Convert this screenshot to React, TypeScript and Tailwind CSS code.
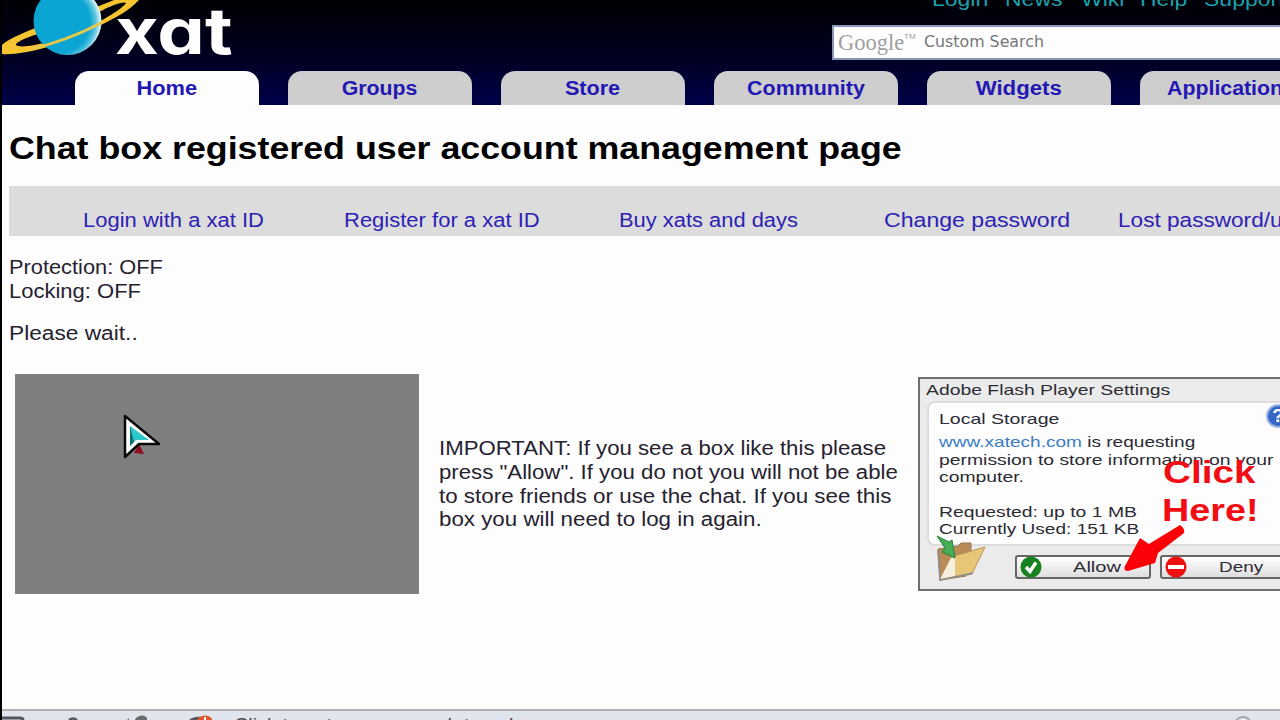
import type { ReactNode } from 'react'

const tabs = [
  { label: 'Home', active: true, stretch: 'scale-x-[1.09]' },
  { label: 'Groups', stretch: 'scale-x-[1.065]' },
  { label: 'Store', stretch: 'scale-x-[1.08]' },
  { label: 'Community', stretch: 'scale-x-[1.07]' },
  { label: 'Widgets', stretch: 'scale-x-[1.11]' },
  { label: 'Applications', stretch: 'scale-x-[1.065]' },
]

const topLinks = [
  { label: 'Login', box: 'w-[73px]' },
  { label: 'News', box: 'w-[76px]' },
  { label: 'Wiki', box: 'w-[59px]' },
  { label: 'Help', box: 'w-[64px]' },
  { label: 'Support', box: 'w-[90px]' },
]

const accountLinks = [
  { label: 'Login with a xat ID', box: 'w-[261px]', stretch: 'scale-x-[1.1]' },
  { label: 'Register for a xat ID', box: 'w-[275px]', stretch: 'scale-x-[1.1]' },
  { label: 'Buy xats and days', box: 'w-[265px]', stretch: 'scale-x-[1.095]' },
  { label: 'Change password', box: 'w-[234px]', stretch: 'scale-x-[1.155]' },
  { label: 'Lost password/user', box: 'w-[240px]', stretch: 'scale-x-[1.13]' },
]

function Wide({ className, children }: { className: string; children: ReactNode }) {
  return <span className={`inline-block origin-left whitespace-nowrap ${className}`}>{children}</span>
}

function Planet() {
  return (
    <svg className="h-[60px] w-[142px] shrink-0" viewBox="0 0 142 60">
      <defs>
        <radialGradient id="ball" cx="0.38" cy="0.52" r="0.64">
          <stop offset="0.7" stopColor="#0aa5d3" />
          <stop offset="0.84" stopColor="#5cc4e0" />
          <stop offset="0.97" stopColor="#f6fcfe" />
        </radialGradient>
      </defs>
      <path d="M36 27C18 34 5 40 0 45V54C10 55 28 52 46 47V42C30 46 18 48 14 45C13 43 22 38 36 34Z" fill="#f6c431" />
      <path d="M92 8 112 0H137C128 10 115 17 97 26V22C111 14 123 6 124 3C122 1 110 5 97 12Z" fill="#f6c431" />
      <circle cx="65.500" cy="21" r="34" fill="url(#ball)" />
      <path d="M30 48.500C52 44 76 35 100 22.500" fill="none" stroke="#e8c84b" strokeWidth="3" />
    </svg>
  )
}

function Header() {
  return (
    <header className="flex h-[105px] shrink-0 flex-col justify-between overflow-hidden bg-linear-to-b from-[#000006] via-[#00001f] to-[#00004a]">
      <div className="flex h-[60px] justify-between">
        <div className="flex">
          <Planet />
          <Wide className="-ml-[29px] h-[60px] scale-x-[1.18] font-[Inter] text-[64px] leading-[62px] font-bold text-white [font-feature-settings:'cv11']">
            xat
          </Wide>
        </div>
        <div className="w-[448px] shrink-0">
          <nav className="-mt-[13px] ml-[100px] flex h-6 w-[400px] text-[20px] leading-6 text-[#1ba0ad]">
            {topLinks.map((link) => (
              <a key={link.label} className={`shrink-0 ${link.box}`}>
                <Wide className="scale-x-[1.15]">{link.label}</Wide>
              </a>
            ))}
          </nav>
          <div className="mt-[14px] flex h-[35px] items-center border-2 border-r-0 border-[#8b95b5] bg-[#fdfefd] pl-[4px]">
            <span className="flex w-[86px] shrink-0 text-[#a0a0a0]">
              <Wide className="w-[66px] scale-x-[0.98] font-['Liberation_Serif',serif] text-[23px] leading-7">Google</Wide>
              <span className="text-[8px] leading-4">TM</span>
            </span>
            <Wide className="scale-x-[1.02] font-['DejaVu_Sans',sans-serif] text-[15.500px] text-[#777]">Custom Search</Wide>
          </div>
        </div>
      </div>
      <nav className="flex gap-[29px] pl-[73px]">
        {tabs.map((tab) => (
          <a
            key={tab.label}
            className={`flex h-[34px] w-[184px] shrink-0 justify-center rounded-t-[14px] text-[20px] leading-[34px] font-bold text-[#2318b4] ${
              tab.active ? 'bg-[#fdfdfe]' : 'bg-[#cecece]'
            }`}
          >
            <span className={`block pr-px ${tab.stretch}`}>{tab.label}</span>
          </a>
        ))}
      </nav>
    </header>
  )
}

function FolderIcon() {
  return (
    <svg className="h-[48px] w-[50px] shrink-0" viewBox="0 0 50 48">
      <path d="M2 14 22 11 25 8H35V16L30 41 4 45Z" fill="#b98a55" stroke="#8f7650" />
      <path d="M4 45 15 22 49 12 36 39Z" fill="#e8c677" stroke="#b29559" />
      <path d="M4 44 15 23 19 22 19 41Z" fill="#f6efdc" />
      <path d="M2 15 4 45 37 38" fill="none" stroke="#8c8c8c" strokeWidth="1.500" />
      <path d="M1 1 13 7 16 5 19 23 6 17 9 13Z" fill="#48ad58" stroke="#238338" />
    </svg>
  )
}

function FlashDialog() {
  return (
    <div className="relative flex h-[214px] w-[390px] shrink-0 flex-col border-2 border-[#6f6f6f] bg-[#ebebeb] text-[15px] text-[#2b2b33]">
      <div className="h-[22px] pl-[6px] leading-[22px]">
        <Wide className="scale-x-[1.29]">Adobe Flash Player Settings</Wide>
      </div>
      <div className="ml-[7px] flex h-[145px] rounded-l-[8px] border-2 border-r-0 border-[#dcdcdc] bg-[#fdfdfe] pt-[7px] pl-[10px] leading-[17.400px]">
        <div className="w-[327px] shrink-0">
          <p><Wide className="scale-x-[1.3]">Local Storage</Wide></p>
          <p className="mt-[6px]">
            <Wide className="scale-x-[1.27]">
              <span className="text-[#3a7cc4]">www.xatech.com</span> is requesting
            </Wide>
          </p>
          <p><Wide className="scale-x-[1.29]">permission to store information on your</Wide></p>
          <p><Wide className="scale-x-[1.29]">computer.</Wide></p>
          <p className="mt-[17px]"><Wide className="scale-x-[1.29]">Requested: up to 1 MB</Wide></p>
          <p><Wide className="scale-x-[1.27]">Currently Used: 151 KB</Wide></p>
        </div>
        <span className="-mt-[6px] flex size-[24px] shrink-0 items-center justify-center rounded-full border-2 border-[#9db4df] bg-[#3566c8] text-[19px] font-bold text-white">
          ?
        </span>
      </div>
      <div className="flex items-start pl-[16px]">
        <div className="-mt-[11px] h-[40px]"><FolderIcon /></div>
        <button className="mt-[9px] ml-[29px] flex h-[24px] w-[136px] shrink-0 items-center rounded-[3px] border-2 border-[#666] bg-linear-to-b from-white to-[#dedede] pl-[3px]">
          <svg className="size-[22px]" viewBox="0 0 22 22">
            <circle cx="11" cy="11" r="10.500" fill="#15811f" />
            <path d="M6 11 10 15.500 16 6.500" fill="none" stroke="#fff" strokeWidth="3.500" />
          </svg>
          <Wide className="ml-[31px] scale-x-[1.34] leading-5">Allow</Wide>
        </button>
        <button className="mt-[9px] ml-[9px] flex h-[24px] w-[136px] shrink-0 items-center rounded-[3px] border-2 border-[#666] bg-linear-to-b from-white to-[#dedede] pl-[3px]">
          <svg className="size-[22px]" viewBox="0 0 22 22">
            <circle cx="11" cy="11" r="10.500" fill="#ee1111" />
            <path d="M3 11H19" stroke="#fff" strokeWidth="4" />
          </svg>
          <Wide className="ml-[32px] scale-x-[1.26] leading-5">Deny</Wide>
        </button>
      </div>

      {/* callout on top of the dialog */}
      <div className="absolute top-[74px] left-[243px] text-[32px] leading-[38px] font-bold text-[#f20d14]">
        <p><Wide className="scale-x-[1.21]">Click</Wide></p>
        <p><Wide className="-ml-px scale-x-[1.18]">Here!</Wide></p>
      </div>
      <svg className="absolute top-[143px] left-[200px] h-[52px] w-[70px]" viewBox="0 0 70 52">
        <path d="M60 3Q65 6 64 11L38 31 35 41 8 49Q3 49 5 44L20 16 29 22Z" fill="#fb0007" />
      </svg>
    </div>
  )
}

function Cursor() {
  return (
    <svg className="mt-[40px] ml-[107px] h-[46px] w-[42px]" viewBox="0 0 42 46">
      <path d="M12 39 17 30 22 40Z" fill="#8f0d1c" />
      <path d="M3 2V43L17 30H37Z" fill="#fff" stroke="#0a0a0a" strokeWidth="2.500" strokeLinejoin="round" />
      <path d="M8 12V32L14 26H27Z" fill="#2cc9cb" />
      <path d="M8 12V32L12 28Z" fill="#126d75" />
    </svg>
  )
}

function StatusBar() {
  return (
    <footer className="mt-auto flex h-[11px] shrink-0 overflow-hidden border-t-2 border-[#b0b0b0] bg-[#e0e4ec]">
      <svg className="h-[9px] w-[232px] shrink-0" viewBox="0 0 232 9">
        <path d="M0 7H18Q21 7 21 9" fill="none" stroke="#55555c" strokeWidth="3" />
        <path d="M67 9Q71 6 75 9" fill="none" stroke="#55555c" strokeWidth="2.500" />
        <path d="M125 9 127 7V9ZM133 9Q134 5 140 4.500Q146 5 145 9Z" fill="#6b6b70" />
        <path d="M187 9Q192 5 200 6V9Z" fill="#55555c" />
        <path d="M195 9Q197 5 203 4.500Q210 5 210 9Z" fill="#e2562e" />
        <path d="M203 6V9" stroke="#fff" strokeWidth="2" />
      </svg>
      <Wide className="mt-[2px] scale-x-[1.1] text-[18px] leading-6 text-[#4a4a52]">
        Click to enter your search term here
      </Wide>
      <svg className="mr-[26px] ml-auto h-[9px] w-[22px] shrink-0" viewBox="0 0 22 9">
        <circle cx="11" cy="14" r="8" fill="#eceef2" stroke="#a3a3aa" strokeWidth="2" />
      </svg>
    </footer>
  )
}

export default function App() {
  return (
    <div className="flex h-[720px] w-[1280px] flex-col overflow-hidden border-l-2 border-black bg-[#fdfdfe] font-['Liberation_Sans',sans-serif] text-[20px] text-[#26222e]">
      <Header />
      <main className="pl-[7px]">
        <h1 className="mt-[22px] text-[32px] leading-[42px] font-bold text-black">
          <Wide className="scale-x-[1.118]">Chat box registered user account management page</Wide>
        </h1>
        <nav className="mt-[17px] flex h-[50px] bg-[#dcdcdc] pt-[22px] pl-[74px] leading-6 text-[#2d22b4]">
          {accountLinks.map((link) => (
            <a key={link.label} className={`shrink-0 ${link.box}`}>
              <Wide className={link.stretch}>{link.label}</Wide>
            </a>
          ))}
        </nav>
        <div className="mt-[19px] leading-6">
          <p><Wide className="scale-x-[1.09]">Protection: OFF</Wide></p>
          <p><Wide className="scale-x-[1.1]">Locking: OFF</Wide></p>
          <p className="mt-[18px]"><Wide className="scale-x-[1.135]">Please wait..</Wide></p>
        </div>
        <div className="mt-[28px] flex pl-[6px]">
          <div className="mt-px h-[220px] w-[404px] shrink-0 bg-[#7f7f7f]">
            <Cursor />
          </div>
          <div className="mt-[64px] ml-[20px] w-[479px] shrink-0 leading-[23.800px]">
            <p><Wide className="scale-x-[1.11]">IMPORTANT: If you see a box like this please</Wide></p>
            <p><Wide className="scale-x-[1.11]">press "Allow". If you do not you will not be able</Wide></p>
            <p><Wide className="scale-x-[1.118]">to store friends or use the chat. If you see this</Wide></p>
            <p><Wide className="scale-x-[1.116]">box you will need to log in again.</Wide></p>
          </div>
          <div className="mt-[4px]">
            <FlashDialog />
          </div>
        </div>
      </main>
      <StatusBar />
    </div>
  )
}
